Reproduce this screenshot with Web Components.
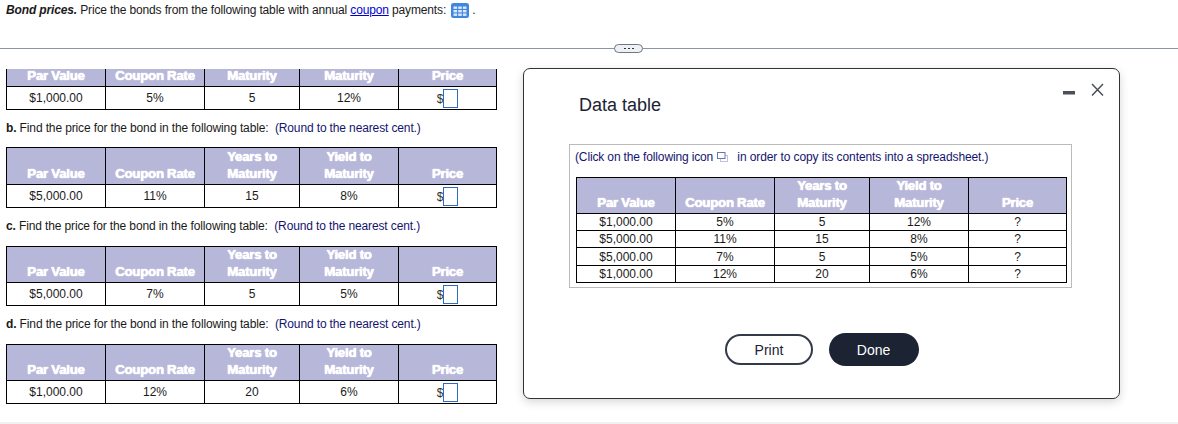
<!DOCTYPE html>
<html>
<head>
<meta charset="utf-8">
<title>Bond prices</title>
<style>
  html, body { margin: 0; padding: 0; background: #fff; }
  body { width: 1178px; height: 424px; overflow: hidden; font-family: "Liberation Sans", Arial, sans-serif; color: #000; }
</style>
</head>
<body>
<bond-question></bond-question>
<bond-pane>
  <bond-table rows="$1,000.00|5%|5|12%" answer cropped></bond-table>
  <bond-part label="b." space="37"></bond-part>
  <bond-table rows="$5,000.00|11%|15|8%" answer loose></bond-table>
  <bond-part label="c." space="38"></bond-part>
  <bond-table rows="$5,000.00|7%|5|5%" answer></bond-table>
  <bond-part label="d." space="38"></bond-part>
  <bond-table rows="$1,000.00|12%|20|6%" answer></bond-table>
</bond-pane>
<page-strip></page-strip>
<data-dialog>
  <bond-table slot="table" rows="$1,000.00|5%|5|12%;$5,000.00|11%|15|8%;$5,000.00|7%|5|5%;$1,000.00|12%|20|6%"></bond-table>
</data-dialog>

<script>
class BondQuestion extends HTMLElement {
  constructor() {
    super();
    this.attachShadow({ mode: 'open' }).innerHTML = `
      <style>
        :host { display: block; height: 69px; font-size: 12px; color: #1a1a1a; letter-spacing: -0.14px; }
        .prompt { display: flex; align-items: center; height: 20px; padding: 0 0 0 6px; white-space: pre; }
        b { font-style: italic; }
        a { color: #0000d0; text-decoration: underline; }
        svg { margin: 0 0 0 5px; }
        .rule { position: relative; height: 1px; margin-top: 28px; background: #8c92a8; }
        /* expander handle sits on the divider */
        .pill {
          position: absolute; left: 614px; top: -4px; width: 29px; height: 9px; box-sizing: border-box;
          border: 1px solid #6f7786; border-radius: 5px; background: #eef0f4;
          display: flex; align-items: center; justify-content: center; gap: 2px;
        }
        .pill i { width: 2px; height: 1px; background: #333; }
      </style>
      <div class="prompt"><b>Bond prices.</b> Price the bonds from the following table with annual <a>coupon</a> payments:<svg width="18" height="15" viewBox="0 0 18 15">
          <rect x="0" y="0" width="18" height="15" rx="2.5" fill="#3f86e0"/>
          <g fill="#dce9fb">
            <rect x="2.5" y="3.5" width="3.6" height="2.4"/><rect x="7.2" y="3.5" width="3.6" height="2.4"/><rect x="11.9" y="3.5" width="3.6" height="2.4"/>
            <rect x="2.5" y="7" width="3.6" height="2.4"/><rect x="7.2" y="7" width="3.6" height="2.4"/><rect x="11.9" y="7" width="3.6" height="2.4"/>
            <rect x="2.5" y="10.5" width="3.6" height="2.4"/><rect x="7.2" y="10.5" width="3.6" height="2.4"/><rect x="11.9" y="10.5" width="3.6" height="2.4"/>
          </g>
        </svg><span> .</span></div>
      <div class="rule"><div class="pill"><i></i><i></i><i></i></div></div>
    `;
  }
}

class BondPane extends HTMLElement {
  constructor() {
    super();
    this.attachShadow({ mode: 'open' }).innerHTML = `
      <style>
        :host { display: block; height: 353px; overflow: hidden; }
        .inner { padding-left: 6px; width: 490px; }
      </style>
      <div class="inner"><slot></slot></div>
    `;
  }
}

class PageStrip extends HTMLElement {
  constructor() {
    super();
    this.attachShadow({ mode: 'open' }).innerHTML = `
      <style>:host { display: block; height: 2px; background: #f1f1f1; }</style>
    `;
  }
}

class BondPart extends HTMLElement {
  constructor() {
    super();
    const label = this.getAttribute('label');
    const space = this.getAttribute('space') || 38;
    this.attachShadow({ mode: 'open' }).innerHTML = `
      <style>
        :host {
          display: flex; align-items: center; height: ${space}px; box-sizing: border-box; padding-bottom: 2px;
          font-size: 12px; color: #1a1a1a; white-space: pre; letter-spacing: -0.13px;
        }
        span { color: #14146e; }
      </style>
      <b>${label}</b> Find the price for the bond in the following table:  <span>(Round to the nearest cent.)</span>
    `;
  }
}

class BondTable extends HTMLElement {
  constructor() {
    super();
    const answer = this.hasAttribute('answer');
    const cropped = this.hasAttribute('cropped');
    const lineHeight = cropped ? 13 : (this.hasAttribute('loose') ? 17 : 16.5);
    const rows = this.getAttribute('rows').split(';').map(r => r.split('|'));
    const body = rows.map(cells => {
      const tds = cells.map(c => `<td>${c}</td>`).join('');
      const last = answer
        ? `<td><span class="dollar">$</span><span class="box"></span></td>`
        : `<td>?</td>`;
      return `<tr>${tds}${last}</tr>`;
    }).join('');
    // the first table is scrolled under the divider, so only its last header line shows
    const years = cropped ? 'Maturity' : 'Years to<br>Maturity';
    const yieldTo = cropped ? 'Maturity' : 'Yield to<br>Maturity';
    this.attachShadow({ mode: 'open' }).innerHTML = `
      <style>
        :host { display: block; font-size: 12px; color: #1a1a1a; }
        table { border-collapse: collapse; table-layout: fixed; width: 490px; }
        th, td { border: 1px solid #000; padding: 0; text-align: center; }
        ${cropped ? 'th { border-top: 0; }' : ''}
        th {
          vertical-align: bottom; padding-bottom: ${cropped ? 4 : 2}px;
          background: #b7b7da; color: #fff; font-weight: bold; font-size: 13.33px; line-height: ${lineHeight}px;
          letter-spacing: -0.3px; text-shadow: 0 0 1px #fff, 0 0 1px #fff;
        }
        td { height: ${answer ? 23 : 17}px; box-sizing: border-box; line-height: 14px; }
        ${answer ? '' : 'tr:nth-child(3) td { height: 18px; }'}
        .dollar { font-size: 12px; color: #333; }
        .box {
          display: inline-block; width: 15px; height: 19px; box-sizing: border-box;
          border: 1px solid #2b6cc4; vertical-align: -5px; background: #fff;
        }
      </style>
      <table>
        <colgroup><col style="width:99px"><col style="width:99px"><col style="width:95px"><col style="width:99px"><col style="width:98px"></colgroup>
        <thead><tr><th>Par Value</th><th>Coupon Rate</th><th>${years}</th><th>${yieldTo}</th><th>Price</th></tr></thead>
        <tbody>${body}</tbody>
      </table>
    `;
  }
}

class DataDialog extends HTMLElement {
  constructor() {
    super();
    this.attachShadow({ mode: 'open' }).innerHTML = `
      <style>
        :host {
          position: absolute; left: 523px; top: 68px; width: 597px; height: 331px; box-sizing: border-box;
          display: block; background: #fff; border: 1px solid #333; border-radius: 7px;
          box-shadow: 0 3px 10px rgba(0,0,0,.16); color: #1a1a1a;
        }
        .wrap { display: flex; flex-direction: column; height: 100%; padding-left: 45px; }
        .controls { position: absolute; right: 15px; top: 14px; display: flex; align-items: center; gap: 16px; }
        h2 { margin: 24px 0 0 10px; font-size: 18px; line-height: 24px; font-weight: normal; color: #1b2333; }
        .box { width: 503px; height: 144px; box-sizing: border-box; margin-top: 27px; border: 1px solid #bbb; padding: 0 0 0 6px; }
        .note { display: flex; align-items: center; height: 24px; margin: 0 0 8px -1px; font-size: 12px; color: #14146e; white-space: pre; letter-spacing: -0.14px; }
        .note span { letter-spacing: -0.1px; }
        .note svg { margin: 0 9px 0 1px; }
        .actions { display: flex; align-items: center; justify-content: center; gap: 16px; margin: 45px 0 0 -45px; }
        button { font: 14px "Liberation Sans", Arial, sans-serif; border-radius: 17px; padding: 0; }
        .print { width: 88px; height: 31px; padding-left: 1px; background: #fff; color: #1b2333; border: 2px solid #333a4a; }
        .done { width: 90px; height: 33px; background: #1c2433; color: #fff; border: 0; }
      </style>
      <div class="controls">
        <svg width="12" height="14" viewBox="0 0 12 14"><rect x="0" y="8" width="12" height="3.5" fill="#4a4f58"/></svg>
        <svg width="13" height="14" viewBox="0 0 13 14"><path d="M1 1l11 11.5M12 1l-11 11.5" stroke="#4a4f58" stroke-width="1.5" fill="none"/></svg>
      </div>
      <div class="wrap">
        <h2>Data table</h2>
        <div class="box">
          <div class="note">(Click on the following icon <svg width="11" height="10" viewBox="0 0 11 10">
              <rect x="3.5" y="3.5" width="7" height="6" fill="#fff" stroke="#bcc3dc"/>
              <rect x="0.5" y="0.5" width="7.5" height="6" fill="#fff" stroke="#6478b4"/>
            </svg><span>in order to copy its contents into a spreadsheet.)</span></div>
          <slot name="table"></slot>
        </div>
        <div class="actions">
          <button class="print">Print</button>
          <button class="done">Done</button>
        </div>
      </div>
    `;
  }
}

customElements.define('bond-question', BondQuestion);
customElements.define('bond-pane', BondPane);
customElements.define('page-strip', PageStrip);
customElements.define('bond-part', BondPart);
customElements.define('bond-table', BondTable);
customElements.define('data-dialog', DataDialog);
</script>
</body>
</html>
